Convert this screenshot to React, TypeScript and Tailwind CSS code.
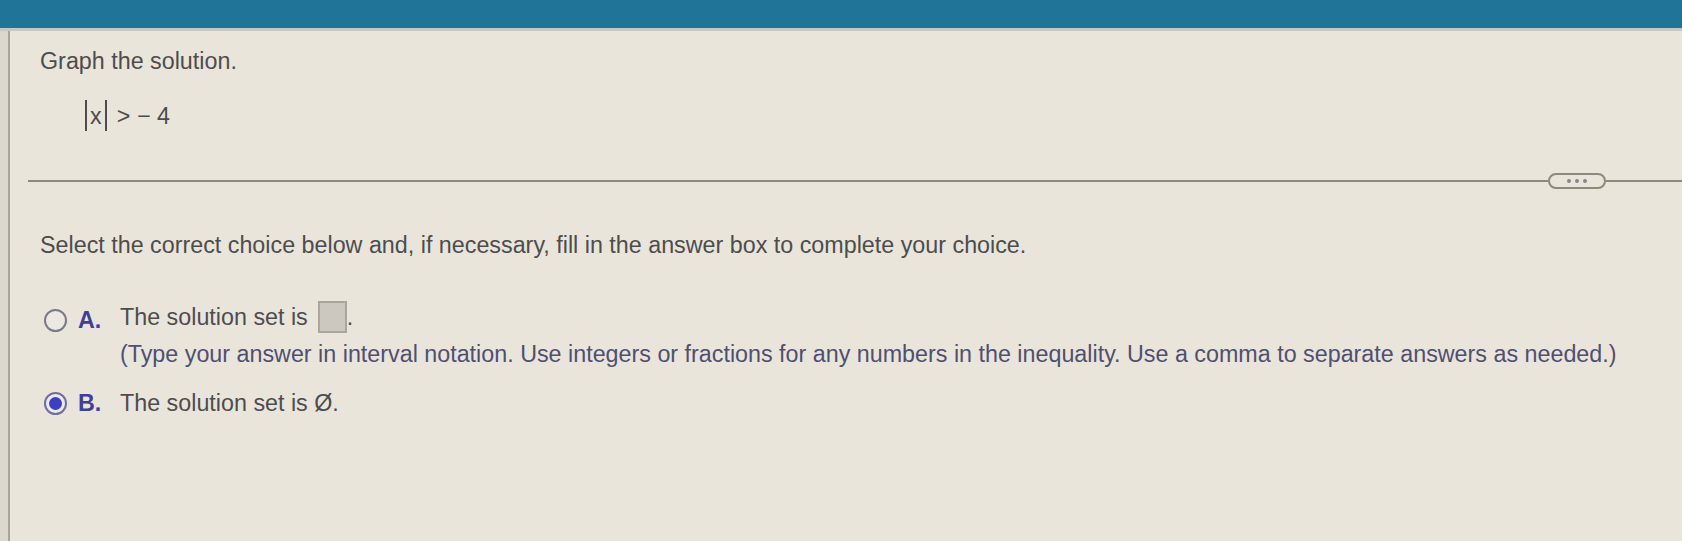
import React from 'react'

const font = { fontFamily: '"Liberation Sans", Arial, sans-serif' }

function Radio({ checked }: { checked?: boolean }) {
    if (checked) {
        return (
            <span className="flex h-[23px] w-[23px] items-center justify-center rounded-full border-2 border-[#6d6f9c] bg-[#eceaf0]">
                <span className="h-[13px] w-[13px] rounded-full bg-[#3b40c2]" />
            </span>
        )
    }
    return <span className="block h-[23px] w-[23px] rounded-full border-2 border-[#7a7a88] bg-[#ece9e2]" />
}

export default function App() {
    return (
        <div className="flex h-[541px] w-full flex-col overflow-hidden bg-[#e9e5db] text-[23.3px] text-[#4d4d4d]" style={font}>
            {/* top bar */}
            <div className="h-[31px] shrink-0 bg-[#1f7497] border-b-[3px] border-[#c4c8c6]" />

            <div className="flex flex-1">
                {/* left gutter */}
                <div className="w-[10px] shrink-0 border-r-2 border-[#a9a59b] bg-[#dcd8ce]" />

                <div className="flex-1">
                    <div className="pl-[30px] pt-[16px]">
                        <p className="leading-[28px]">Graph the solution.</p>
                        <p className="ml-[45px] mt-[25px] flex items-center leading-[28px]">
                            <span className="inline-block h-[31px] w-[2px] bg-[#4d4d4d]" />
                            <span className="mx-[3px]">x</span>
                            <span className="inline-block h-[31px] w-[2px] bg-[#4d4d4d]" />
                            <span className="ml-[10px]">&gt;</span>
                            <span className="ml-[7px]">−</span>
                            <span className="ml-[6px]">4</span>
                        </p>
                    </div>

                    {/* divider with more button */}
                    <div className="mt-[42px] flex items-center pl-[18px]">
                        <div className="h-[2px] flex-1 bg-[#8d897b]" />
                        <div className="flex h-[16px] w-[58px] items-center justify-center gap-[4px] rounded-full border-2 border-[#8d897b]">
                            <span className="h-[4px] w-[4px] rounded-full bg-[#85858a]" />
                            <span className="h-[4px] w-[4px] rounded-full bg-[#85858a]" />
                            <span className="h-[4px] w-[4px] rounded-full bg-[#85858a]" />
                        </div>
                        <div className="h-[2px] w-[76px] bg-[#8d897b]" />
                    </div>

                    <div className="pl-[30px]">
                        <p className="mt-[42px] leading-[28px]">
                            Select the correct choice below and, if necessary, fill in the answer box to complete your choice.
                        </p>

                        {/* choice A */}
                        <div className="mt-[41px] flex">
                            <div className="flex w-[80px] shrink-0 items-center gap-[11px] self-start pl-[4px] pt-[3px]">
                                <Radio />
                                <span className="font-bold text-[#3e3f9a]">A.</span>
                            </div>
                            <div>
                                <p className="flex items-center leading-[34px]">
                                    The solution set is
                                    <span className="ml-[10px] inline-block h-[32px] w-[29px] border-2 border-[#aaa69e] bg-[#ccc8bf]" />
                                    <span>.</span>
                                </p>
                                <p className="mt-[6px] leading-[28px] text-[#4f5070]">
                                    (Type your answer in interval notation. Use integers or fractions for any numbers in the inequality. Use a comma to separate answers as needed.)
                                </p>
                            </div>
                        </div>

                        {/* choice B */}
                        <div className="mt-[18px] flex items-center">
                            <div className="flex w-[80px] shrink-0 items-center gap-[11px] pl-[4px]">
                                <Radio checked />
                                <span className="font-bold text-[#3e3f9a]">B.</span>
                            </div>
                            <p className="leading-[28px]">The solution set is Ø.</p>
                        </div>
                    </div>
                </div>
            </div>
        </div>
    )
}
